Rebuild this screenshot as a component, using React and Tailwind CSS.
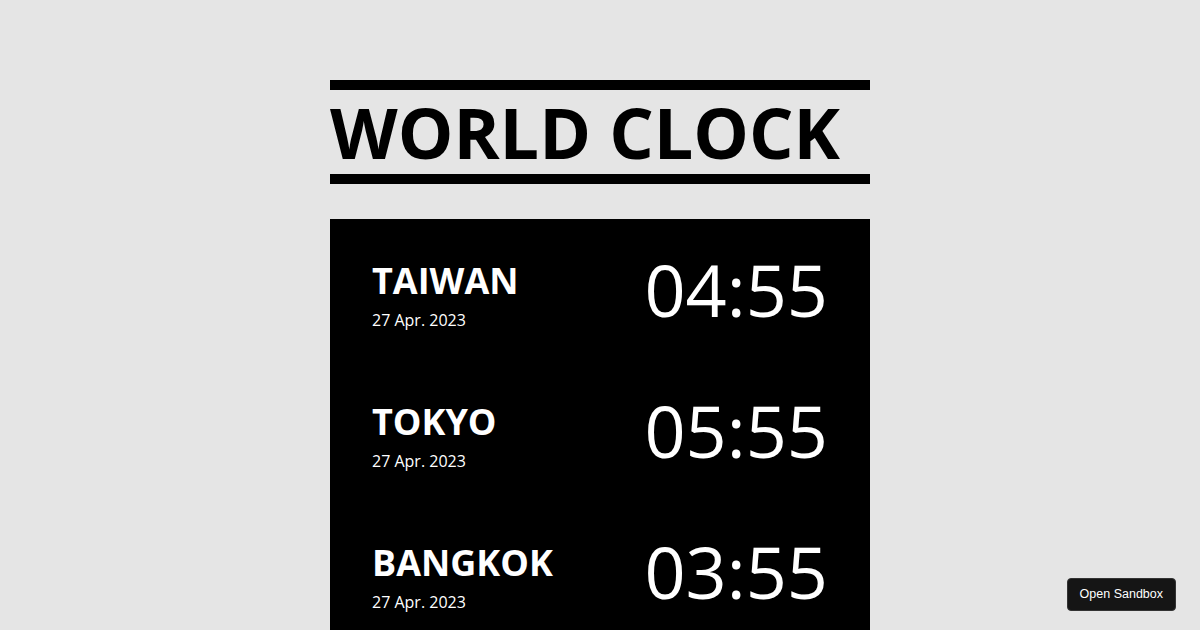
export default function App() {
  const rows = [
    { name: "TAIWAN", date: "27 Apr. 2023", time: "04:55" },
    { name: "TOKYO", date: "27 Apr. 2023", time: "05:55" },
    { name: "BANGKOK", date: "27 Apr. 2023", time: "03:55" },
  ];
  return (
    <div
      className="w-[1200px] h-[630px] bg-[#e5e5e5] overflow-hidden relative"
      style={{ fontFamily: '"Open Sans", sans-serif' }}
    >
      <div className="w-[540px] mx-auto pt-[80px]">
        <div className="h-[10px] bg-black" />
        <h1 className="text-[70px] font-bold leading-[84px] text-black whitespace-nowrap">
          WORLD CLOCK
        </h1>
        <div className="h-[10px] bg-black" />
        <div className="mt-[35px] bg-black text-white">
          {rows.map((r) => (
            <div key={r.name} className="h-[141px] flex justify-between items-start pl-[42px] pr-[42px]">
              <div className="pt-[40px]">
                <div className="text-[36px] font-bold leading-[44px]">{r.name}</div>
                <div className="mt-[5px] text-[16px] leading-[24px]">{r.date}</div>
              </div>
              <div className="pt-[20px] text-[72px] font-normal leading-[100px]">{r.time}</div>
            </div>
          ))}
        </div>
      </div>
      <div
        className="absolute right-[24px] bottom-[19px] bg-[#151515] text-white text-[12.5px] px-[12px] h-[33px] flex items-center rounded-[4px] border border-[#333]"
        style={{ fontFamily: '"Liberation Sans", Arial, sans-serif' }}
      >
        Open Sandbox
      </div>
    </div>
  );
}
